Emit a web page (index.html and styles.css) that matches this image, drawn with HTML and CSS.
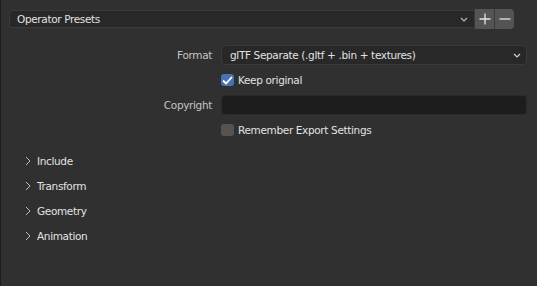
FILE: index.html
```html
<!DOCTYPE html>
<html lang="en">
<head>
    <meta charset="UTF-8">
    <meta name="viewport" content="width=device-width, initial-scale=1.0">
    <title>Export glTF</title>
    <link rel="stylesheet" href="styles.css">
</head>
<body>
    <div class="presets">
        <div class="preset-select">
            <span>Operator Presets</span>
            <svg class="arrow" width="8" height="5" viewBox="0 0 8 5"><path d="M1 1 L4 4 L7 1" fill="none" stroke="#b8b8b8" stroke-width="1.2"/></svg>
        </div>
        <div class="preset-buttons">
            <button class="icon-btn">
                <svg width="12" height="12" viewBox="0 0 12 12"><path d="M6 0.5 V11.5 M0.5 6 H11.5" stroke="#e6e6e6" stroke-width="1.3"/></svg>
            </button>
            <button class="icon-btn">
                <svg width="12" height="12" viewBox="0 0 12 12"><path d="M0.5 6 H11.5" stroke="#e6e6e6" stroke-width="1.3"/></svg>
            </button>
        </div>
    </div>

    <div class="props">
        <div class="prop-label">Format</div>
        <div class="dropdown">
            <span>glTF Separate (.gltf + .bin + textures)</span>
            <svg class="arrow" width="8" height="5" viewBox="0 0 8 5"><path d="M1 1 L4 4 L7 1" fill="none" stroke="#d0d0d0" stroke-width="1.2"/></svg>
        </div>

        <div class="prop-label"></div>
        <label class="check">
            <span class="box checked">
                <svg width="11" height="9" viewBox="0 0 11 9"><path d="M1 4.5 L4 7.5 L10 1" fill="none" stroke="#fff" stroke-width="1.8"/></svg>
            </span>
            Keep original
        </label>

        <div class="prop-label">Copyright</div>
        <div class="text-field"></div>

        <div class="prop-label"></div>
        <label class="check">
            <span class="box"></span>
            Remember Export Settings
        </label>
    </div>

    <div class="panels">
        <div class="panel"><svg class="chevron" width="6" height="10" viewBox="0 0 6 10"><path d="M1 1 L5 5 L1 9" fill="none" stroke="#bdbdbd" stroke-width="1"/></svg>Include</div>
        <div class="panel"><svg class="chevron" width="6" height="10" viewBox="0 0 6 10"><path d="M1 1 L5 5 L1 9" fill="none" stroke="#bdbdbd" stroke-width="1"/></svg>Transform</div>
        <div class="panel"><svg class="chevron" width="6" height="10" viewBox="0 0 6 10"><path d="M1 1 L5 5 L1 9" fill="none" stroke="#bdbdbd" stroke-width="1"/></svg>Geometry</div>
        <div class="panel"><svg class="chevron" width="6" height="10" viewBox="0 0 6 10"><path d="M1 1 L5 5 L1 9" fill="none" stroke="#bdbdbd" stroke-width="1"/></svg>Animation</div>
    </div>
</body>
</html>
```

FILE: styles.css
```css
/* General Styles */
body {
    margin: 0;
    height: 286px;
    background-color: #303030;
    border-left: 1px solid #1e1e1e;
    box-sizing: border-box;
    font-family: 'DejaVu Sans', sans-serif;
    font-size: 10.5px;
    letter-spacing: -0.35px;
    color: #e2e2e2;
    overflow: hidden;
}

/* Presets row */
.presets {
    display: flex;
    padding: 10px 23px 0 8px;
    height: 18px;
}

.preset-select {
    flex: 1;
    display: flex;
    align-items: center;
    justify-content: space-between;
    padding: 0 6px 0 7px;
    background: #282828;
    border: 1px solid #3a3a3a;
    border-right: none;
    border-radius: 4px 0 0 4px;
}

.preset-buttons {
    display: flex;
}

.icon-btn {
    width: 20px;
    height: 20px;
    margin: -1px 0 0 0;
    padding: 0;
    display: flex;
    align-items: center;
    justify-content: center;
    background: #545454;
    border: none;
    border-left: 1px solid #3a3a3a;
}

.icon-btn:last-child {
    border-radius: 0 4px 4px 0;
}

/* Properties */
.props {
    display: grid;
    grid-template-columns: 211px 1fr;
    column-gap: 9px;
    row-gap: 5px;
    padding: 17px 10px 0 0;
}

.prop-label {
    height: 20px;
    line-height: 20px;
    text-align: right;
    color: #c4c4c4;
}

.dropdown {
    height: 18px;
    display: flex;
    align-items: center;
    justify-content: space-between;
    padding: 0 5px 0 8px;
    background: #282828;
    border: 1px solid #3a3a3a;
    border-radius: 4px;
}

.text-field {
    height: 18px;
    background: #1d1d1d;
    border: 1px solid #2a2a2a;
    border-radius: 4px;
}

.check {
    height: 20px;
    display: flex;
    align-items: center;
    gap: 4px;
}

.box {
    width: 13px;
    height: 12px;
    display: flex;
    align-items: center;
    justify-content: center;
    background: #545454;
    border-radius: 3px;
}

.box.checked {
    background: #4772b3;
}

/* Collapsed panels */
.panels {
    display: flex;
    flex-direction: column;
    gap: 5px;
    padding: 11px 0 0 24px;
}

.panel {
    height: 20px;
    display: flex;
    align-items: center;
    gap: 6px;
}
```
